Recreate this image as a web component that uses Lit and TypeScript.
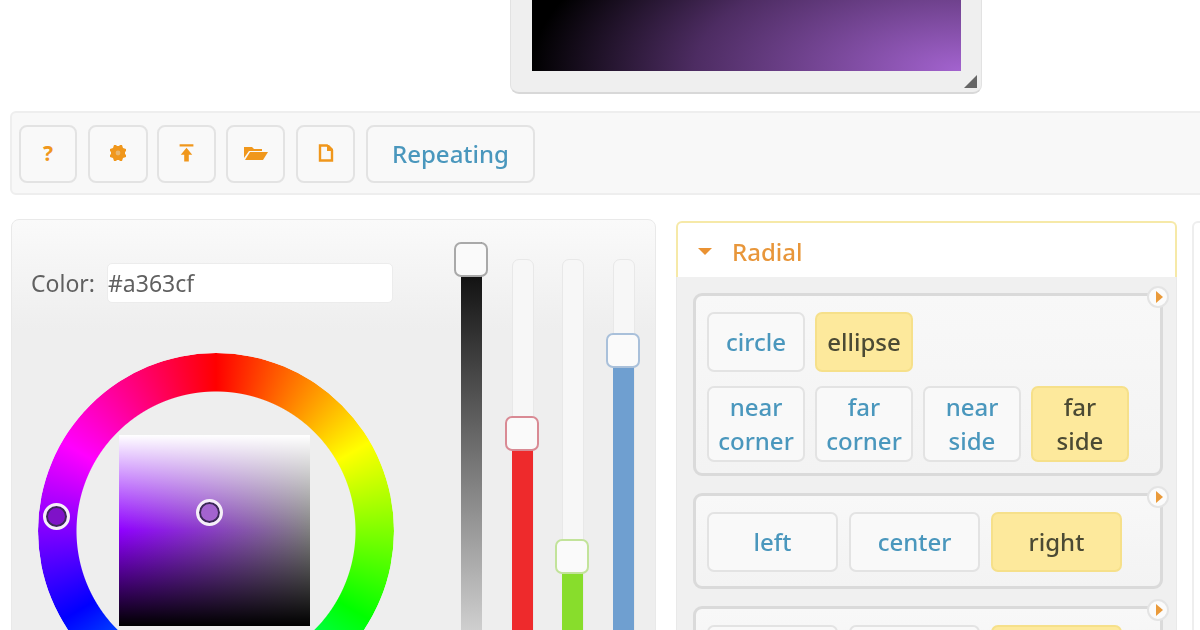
import { LitElement, html, css, svg } from "lit";
import { customElement } from "lit/decorators.js";

const sliders = [
  { kind: "mono", top: 0, thumb: 0, color: "", border: "#a9a9a9" },
  { kind: "c", top: 17, thumb: 174, color: "#ee2a2c", border: "#d98a94" },
  { kind: "c", top: 17, thumb: 297, color: "#88dd2c", border: "#c2e39a" },
  { kind: "c", top: 17, thumb: 91, color: "#6f9fd0", border: "#a9c0da" },
];

const orange = "#f0971c";
const icons = [
  { w: 58, m: 11, icon: html`<span class="q">?</span>` },
  {
    w: 60,
    m: 9,
    icon: svg`<svg width="20" height="20" viewBox="0 0 20 20"><path fill="${orange}" d="M6 2h2l1 1h2l1-1h2l1 3 3 1v2l-1 1v2l1 1v2l-3 1-1 3h-2l-1-1H9l-1 1H6l-1-3-3-1v-2l1-1V9L2 8V6l3-1z"/><circle cx="10" cy="10" r="2.4" fill="#e9b66c"/></svg>`,
  },
  {
    w: 59,
    m: 10,
    icon: svg`<svg width="23" height="23" viewBox="0 0 20 20"><path fill="${orange}" d="M4 2h12v2H4zM10 5l5 6h-3v6H8v-6H5z"/></svg>`,
  },
  {
    w: 59,
    m: 11,
    icon: svg`<svg width="28" height="20" viewBox="0 0 28 20"><path fill="${orange}" d="M2 4h8l2 2h8v2H7L2 15z"/><path fill="${orange}" d="M8 9h18l-5 8H3z"/></svg>`,
  },
  {
    w: 59,
    m: 11,
    icon: svg`<svg width="18" height="20" viewBox="0 0 18 20"><path fill="none" stroke="${orange}" stroke-width="2.4" d="M3 2.5h7l5 5v10H3z"/><path fill="${orange}" d="M10 2h2l4 4v2h-6z"/></svg>`,
  },
];

type B = { t: string[]; on?: boolean };
const groups: { rows: B[][]; cls: string }[] = [
  {
    cls: "narrow",
    rows: [
      [{ t: ["circle"] }, { t: ["ellipse"], on: true }],
      [
        { t: ["near", "corner"] },
        { t: ["far", "corner"] },
        { t: ["near", "side"] },
        { t: ["far", "side"], on: true },
      ],
    ],
  },
  { cls: "wide", rows: [[{ t: ["left"] }, { t: ["center"] }, { t: ["right"], on: true }]] },
  { cls: "wide", rows: [[{ t: [] }, { t: [] }, { t: [], on: true }]] },
];

@customElement("app-root")
export class AppRoot extends LitElement {
  static styles = css`
    :host {
      display: block;
      width: 1200px;
      height: 630px;
      overflow: hidden;
      background: #fff;
      font-family: "Noto Sans", "Open Sans", sans-serif;
    }
    * { box-sizing: border-box; }
    .page { width: 1200px; height: 630px; overflow: hidden; filter: blur(0.5px); }
    .top { padding-left: 510px; }
    .preview {
      position: relative;
      width: 472px;
      height: 94px;
      padding: 0 20px 21px 21px;
      background: #efefef;
      border: 1px solid #e2e2e2;
      border-top: 0;
      border-bottom: 2px solid #d8d8d8;
      border-radius: 0 0 9px 9px;
    }
    .gradient {
      height: 100%;
      background: radial-gradient(ellipse 430px 190px at 100% 100%, #a363cf, #4d2c62 62%, #000 100%);
    }
    .grip { position: absolute; right: 3px; bottom: 3px; }
    .toolbar {
      display: flex;
      align-items: center;
      margin: 17px 0 0 10px;
      width: 1200px;
      height: 84px;
      padding: 2px 8px 0 7px;
      background: #f8f8f8;
      border: 2px solid #eeeeee;
      border-radius: 6px;
    }
    .tool {
      display: flex;
      align-items: center;
      justify-content: center;
      height: 58px;
      padding-bottom: 2px;
      background: #f9f9f9;
      border: 2px solid #e3e3e3;
      border-radius: 8px;
      color: #4a97bd;
      font-size: 24px;
      font-weight: 500;
    }
    .q { color: #f0971c; font-weight: 700; font-size: 21px; }
    .row { display: flex; margin-top: 24px; padding-left: 11px; align-items: flex-start; }
    .panel {
      display: flex;
      flex: none;
      width: 645px;
      height: 500px;
      background: linear-gradient(#fafafa, #eeeeee 110px);
      border: 1px solid #e9e9e9;
      border-radius: 8px;
    }
    .left { flex: none; width: 442px; padding: 43px 0 0 19px; }
    .colorline { display: flex; align-items: center; height: 40px; color: #606060; font-size: 23px; }
    .colorline label { width: 76px; }
    .field {
      display: flex;
      align-items: center;
      width: 286px;
      height: 40px;
      background: #fff;
      border: 1px solid #ececec;
      border-radius: 5px;
    }
    .wheel { position: relative; width: 356px; height: 356px; margin: 50px 0 0 7px; }
    .ring {
      position: absolute;
      inset: 0;
      border-radius: 50%;
      background: conic-gradient(#f00, #ff0 60deg, #0f0 120deg, #0ff 180deg, #00f 240deg, #f0f 300deg, #f00);
      -webkit-mask: radial-gradient(circle, transparent 139px, #000 140px);
      mask: radial-gradient(circle, transparent 139px, #000 140px);
    }
    .square {
      position: absolute;
      left: 81px;
      top: 82px;
      width: 191px;
      height: 191px;
      background:
        linear-gradient(to bottom, #fff, rgba(255,255,255,0) 50%, rgba(0,0,0,0) 50%, #000),
        linear-gradient(to right, #8f00ff, #808080);
    }
    .mark {
      position: absolute;
      width: 27px;
      height: 27px;
      border-radius: 50%;
      border: 3px solid #f5f0f8;
      box-shadow: inset 0 0 0 2px #3a2a55;
    }
    .sliders { display: flex; gap: 16.5px; padding-top: 22px; }
    .slider { position: relative; flex: none; width: 34px; height: 480px; }
    .track {
      position: absolute;
      left: 7px;
      width: 22px;
      bottom: 0;
      background: #f7f7f7;
      border: 1px solid #e8e8e8;
      border-radius: 7px 7px 0 0;
    }
    .fill { position: absolute; left: 7px; width: 21px; bottom: 0; }
    .mono { background: linear-gradient(#000, #bdbdbd 354px, #fff 480px); }
    .thumb {
      position: absolute;
      left: 0;
      width: 34px;
      height: 35px;
      background: #fafafa;
      border: 2px solid #aaa;
      border-radius: 7px;
    }
    .acc { flex: none; width: 501px; margin-left: 20px; margin-top: 2px; }
    .acc-head {
      display: flex;
      align-items: center;
      height: 56px;
      padding: 3px 0 0 20px;
      gap: 20px;
      background: #fff;
      border: 2px solid #f6e9a8;
      border-bottom: 0;
      border-radius: 6px 6px 0 0;
      color: #e8963a;
      font-size: 24px;
      font-weight: 500;
    }
    .arrow { width: 0; height: 0; border: 7px solid transparent; border-top-color: #ea9232; border-bottom: 0; }
    .acc-body {
      display: flex;
      flex-direction: column;
      gap: 17px;
      padding: 16px 13px 0 16px;
      height: 420px;
      background: #f0f0f0;
      border: 1px solid #e9e9e9;
      border-top: 0;
    }
    .group {
      position: relative;
      display: flex;
      flex-direction: column;
      gap: 14px;
      width: 470px;
      background: linear-gradient(#f8f8f8, #f3f3f3);
      border: 3px solid #dadada;
      border-radius: 9px;
    }
    .group.narrow { padding: 16px 11px 11px; }
    .group.wide { padding: 16px 11px 14px; }
    .btns { display: flex; gap: 10px; }
    .wide .btns { gap: 11px; }
    .btn {
      display: flex;
      flex-direction: column;
      align-items: center;
      justify-content: center;
      height: 60px;
      background: #f9f9f9;
      border: 2px solid #e3e3e3;
      border-radius: 7px;
      color: #4a97bd;
      font-size: 24px;
      font-weight: 500;
      line-height: 34px;
    }
    .narrow .btn { width: 98px; }
    .wide .btn { width: 131px; }
    .tall .btn { height: 76px; }
    .btn.on { background: #fde99c; border-color: #f6e08a; color: #4b4a34; }
    .corner {
      position: absolute;
      right: -9px;
      top: -10px;
      display: flex;
      align-items: center;
      justify-content: center;
      width: 22px;
      height: 22px;
      padding-left: 2px;
      background: #fbfbfb;
      border: 2px solid #e4e4e4;
      border-radius: 50%;
    }
    .corner i { width: 0; height: 0; border: 6px solid transparent; border-left: 7px solid #ea9a3a; border-right: 0; }
    .next {
      flex: none;
      width: 100px;
      height: 420px;
      margin: 2px 0 0 15px;
      background: #fff;
      border: 2px solid #eeeeee;
      border-radius: 6px;
    }
  `;

  render() {
    return html`<div class="page">
      <div class="top">
        <div class="preview">
          <div class="gradient"></div>
          <svg class="grip" width="16" height="16" viewBox="0 0 16 16"><path fill="#666" d="M15 2v13H2z"/></svg>
        </div>
      </div>

      <div class="toolbar">
        ${icons.map(
          (t) => html`<div class="tool" style="width:${t.w}px;margin-right:${t.m}px">${t.icon}</div>`
        )}
        <div class="tool" style="width:169px">Repeating</div>
      </div>

      <div class="row">
        <div class="panel">
          <div class="left">
            <div class="colorline">
              <label>Color:</label>
              <div class="field">#a363cf</div>
            </div>
            <div class="wheel">
              <div class="ring"></div>
              <div class="square"></div>
              <div class="mark" style="left:5px;top:150px;background:#7f12c8"></div>
              <div class="mark" style="left:158px;top:146px;background:#a363cf"></div>
            </div>
          </div>
          <div class="sliders">
            ${sliders.map(
              (s) => html`<div class="slider">
                ${s.kind === "mono"
                  ? html`<div class="fill mono" style="top:${s.thumb}px"></div>`
                  : html`<div class="track" style="top:${s.top}px"></div>
                      <div class="fill" style="top:${s.thumb + 20}px;background:${s.color}"></div>`}
                <div class="thumb" style="top:${s.thumb}px;border-color:${s.border}"></div>
              </div>`
            )}
          </div>
        </div>

        <div class="acc">
          <div class="acc-head"><span class="arrow"></span>Radial</div>
          <div class="acc-body">
            ${groups.map(
              (g) => html`<div class="group ${g.cls}">
                ${g.rows.map(
                  (r) => html`<div class="btns ${r[0].t.length > 1 ? "tall" : ""}">
                    ${r.map(
                      (b) => html`<div class="btn ${b.on ? "on" : ""}">
                        ${b.t.map((l) => html`<span>${l}</span>`)}
                      </div>`
                    )}
                  </div>`
                )}
                <span class="corner"><i></i></span>
              </div>`
            )}
          </div>
        </div>
        <div class="next"></div>
      </div>
    </div>`;
  }
}
